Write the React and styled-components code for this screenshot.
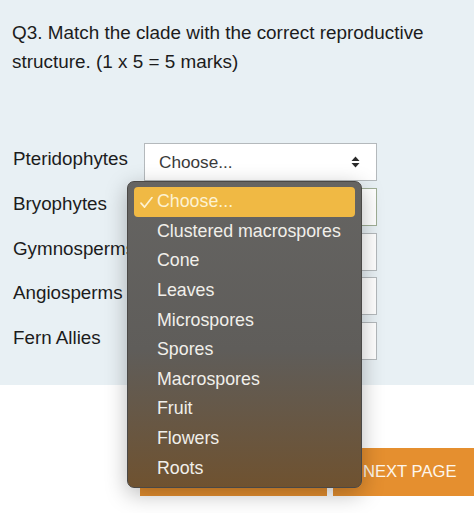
import React from "react";
import styled, { createGlobalStyle } from "styled-components";

const Global = createGlobalStyle`
  html, body { margin: 0; padding: 0; background: #ffffff; }
  body { font-family: "Liberation Sans", Arial, sans-serif; overflow: hidden; }
`;

const Page = styled.div`
  position: relative;
  width: 474px;
  height: 513px;
  overflow: hidden;
  background: #ffffff;
`;

const Panel = styled.section`
  height: 385px;
  box-sizing: border-box;
  background: #e8f0f4;
  padding: 18px 12px 0 12px;
`;

const Question = styled.p`
  margin: 0;
  font-size: 18.9px;
  line-height: 29px;
  color: #1c1c1c;
`;

const Rows = styled.div`
  margin-top: 67px;
  display: flex;
  flex-direction: column;
  gap: 6.8px;
`;

const Row = styled.div`
  display: grid;
  grid-template-columns: 132px 233px;
  align-items: center;
  height: 38px;
`;

const Label = styled.span`
  font-size: 18.8px;
  color: #1c1c1c;
  padding: 0 0 6px 1px;
  white-space: nowrap;
`;

const SelectBox = styled.div`
  height: 38px;
  box-sizing: border-box;
  border: 1px solid ${(p) => (p.$focus ? "#9fae96" : "#b4b9bc")};
  background: #ffffff;
  display: flex;
  align-items: center;
  justify-content: space-between;
  padding: 0 16px 0 14px;
  font-size: 17.2px;
  color: #3a3a3a;
`;

const Footer = styled.div`
  display: flex;
  gap: 6px;
  padding: 63px 0 0 140px;
`;

const Button = styled.div`
  height: 48px;
  width: ${(p) => p.$w}px;
  flex: none;
  background: #e58f2f;
  color: #fdf6ec;
  font-size: 16.6px;
  display: flex;
  align-items: center;
  padding-left: 30px;
  box-sizing: border-box;
  white-space: nowrap;
`;

const Menu = styled.ul`
  position: absolute;
  left: 127px;
  top: 181px;
  width: 235px;
  height: 307px;
  box-sizing: border-box;
  margin: 0;
  padding: 5px 6px 0 6px;
  list-style: none;
  border-radius: 7px;
  border: 1px solid #4a4846;
  background: linear-gradient(180deg, #656462 0%, #5f5d5a 55%, #6f5230 100%);
  box-shadow: 0 6px 22px rgba(0, 0, 0, 0.28);
`;

const Item = styled.li`
  height: 29.6px;
  display: flex;
  align-items: center;
  padding-left: 23px;
  border-radius: 4px;
  font-size: 17.8px;
  color: ${(p) => (p.$active ? "#fdf2d2" : "#f1efea")};
  background: ${(p) => (p.$active ? "#f0b944" : "transparent")};
  position: relative;
  white-space: nowrap;
`;

const Check = styled.svg`
  position: absolute;
  left: 6px;
  top: 50%;
  transform: translateY(-45%);
`;

const Arrows = () => (
  <svg width="9" height="12" viewBox="0 0 9 12">
    <path d="M4.5 0.5 L8.5 5 H0.5 Z" fill="#2a2a2a" />
    <path d="M4.5 11.5 L8.5 7 H0.5 Z" fill="#2a2a2a" />
  </svg>
);

const labels = ["Pteridophytes", "Bryophytes", "Gymnosperms", "Angiosperms", "Fern Allies"];
const options = [
  "Choose...",
  "Clustered macrospores",
  "Cone",
  "Leaves",
  "Microspores",
  "Spores",
  "Macrospores",
  "Fruit",
  "Flowers",
  "Roots",
];

export default function App() {
  return (
    <>
      <Global />
      <Page>
        <Panel>
          <Question>
            Q3. Match the clade with the correct reproductive
            <br />
            structure. (1 x 5 = 5 marks)
          </Question>
          <Rows>
            {labels.map((l, i) => (
              <Row key={l}>
                <Label>{l}</Label>
                <SelectBox $focus={i === 1}>
                  <span>Choose...</span>
                  <Arrows />
                </SelectBox>
              </Row>
            ))}
          </Rows>
        </Panel>
        <Footer>
          <Button $w={187}>PREVIOUS PAGE</Button>
          <Button $w={150}>NEXT PAGE</Button>
        </Footer>
        <Menu>
          {options.map((o, i) => (
            <Item key={o} $active={i === 0}>
              {i === 0 && (
                <Check width="13" height="12" viewBox="0 0 13 12">
                  <path
                    d="M1 6.5 L4.6 10.5 L12 1"
                    fill="none"
                    stroke="#fdf2d2"
                    strokeWidth="1.7"
                    strokeLinecap="round"
                    strokeLinejoin="round"
                  />
                </Check>
              )}
              {o}
            </Item>
          ))}
        </Menu>
      </Page>
    </>
  );
}
